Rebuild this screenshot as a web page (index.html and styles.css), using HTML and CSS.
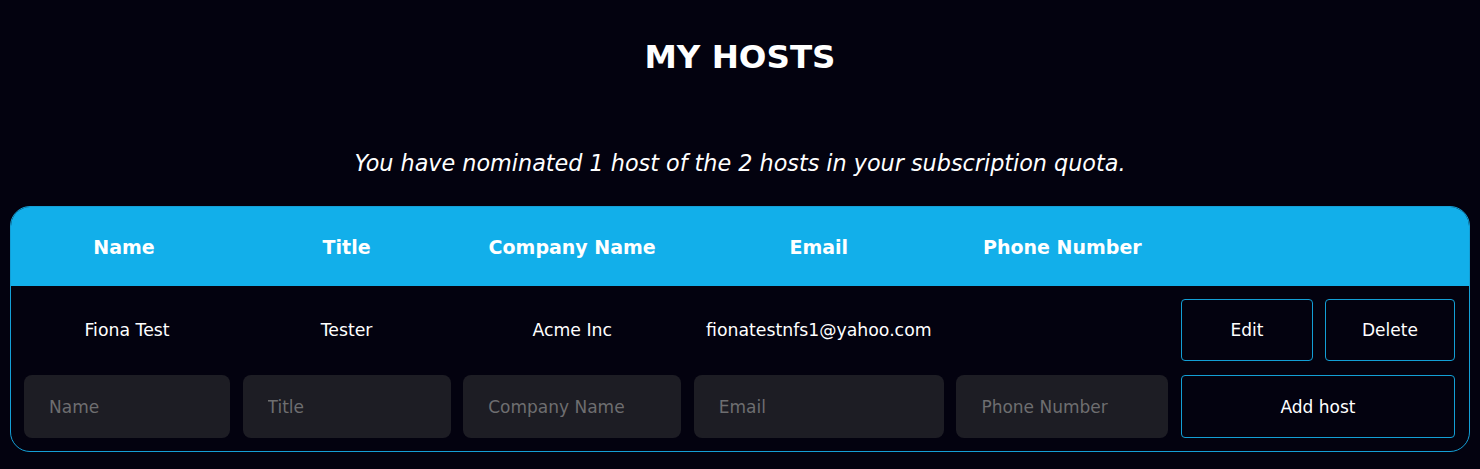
FILE: index.html
```html
<!DOCTYPE html>
<html lang="en">
<head>
<meta charset="utf-8">
<title>My Hosts</title>
<link rel="stylesheet" href="styles.css">
</head>
<body>
<main class="page">
  <h1 class="title">MY HOSTS</h1>
  <p class="subtitle">You have nominated 1 host of the 2 hosts in your subscription quota.</p>
  <section class="hosts">
    <div class="row head">
      <div class="cell">Name</div>
      <div class="cell">Title</div>
      <div class="cell">Company Name</div>
      <div class="cell">Email</div>
      <div class="cell">Phone Number</div>
      <div class="cell"></div>
    </div>
    <div class="body">
      <div class="row data">
        <div class="cell">Fiona Test</div>
        <div class="cell">Tester</div>
        <div class="cell">Acme Inc</div>
        <div class="cell">fionatestnfs1@yahoo.com</div>
        <div class="cell"></div>
        <div class="actions">
          <button class="btn edit" type="button">Edit</button>
          <button class="btn delete" type="button">Delete</button>
        </div>
      </div>
      <form class="row add">
        <input class="field" type="text" placeholder="Name">
        <input class="field" type="text" placeholder="Title">
        <input class="field" type="text" placeholder="Company Name">
        <input class="field" type="email" placeholder="Email">
        <input class="field" type="tel" placeholder="Phone Number">
        <button class="btn" type="button">Add host</button>
      </form>
    </div>
  </section>
</main>
</body>
</html>
```
FILE: styles.css
```css
html, body {
  margin: 0;
  padding: 0;
  background: #03020f;
  color: #ffffff;
  font-family: "DejaVu Sans", "Liberation Sans", sans-serif;
}

.page {
  padding: 0 10px 17px 10px;
}

.title {
  margin: 37px 0 0 0;
  font-size: 32.5px;
  line-height: 40px;
  font-weight: 700;
  text-align: center;
  letter-spacing: 0;
}

.subtitle {
  margin: 72px 0 29px 0;
  font-size: 22.3px;
  line-height: 28px;
  font-style: italic;
  text-align: center;
}

.hosts {
  border: 1px solid #149fd6;
  border-radius: 20px;
  overflow: hidden;
}

.row {
  display: grid;
  grid-template-columns: 206px 208px 218px 250px 212px 274px;
  column-gap: 12.6px;
  align-items: center;
}

.head {
  background: #12afea;
  height: 79px;
  padding: 0 13px;
  font-weight: 700;
  font-size: 19px;
}

.cell {
  text-align: center;
}

.head .cell:first-child {
  transform: translateX(-3px);
}

.body {
  display: flex;
  flex-direction: column;
  gap: 14px;
  padding: 13px 13px 13px 13px;
}

.data {
  height: 62px;
  font-size: 17.3px;
}

.actions {
  display: flex;
  gap: 12px;
  height: 62px;
}

.btn {
  height: 100%;
  background: transparent;
  border: 1px solid #139fd5;
  border-radius: 4px;
  color: #ffffff;
  font-family: inherit;
  font-size: 17px;
  cursor: pointer;
}

.edit {
  flex: 1 1 132px;
}

.delete {
  flex: 1 1 130px;
}

.add {
  height: 63px;
}

.add .btn {
  height: 63px;
}

.field {
  height: 63px;
  box-sizing: border-box;
  width: 100%;
  border: none;
  border-radius: 8px;
  background: #1d1d24;
  color: #ffffff;
  padding: 0 0 0 25px;
  font-family: inherit;
  font-size: 17px;
  outline: none;
}

.field::placeholder {
  color: #6e6e70;
}
```
